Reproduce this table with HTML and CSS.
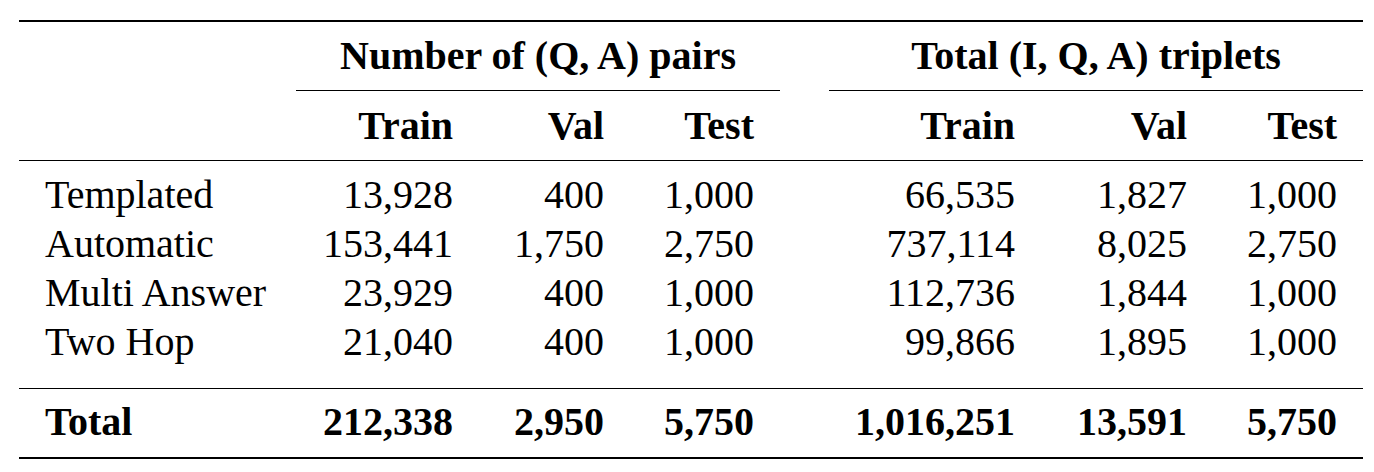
FILE: index.html
```html
<!DOCTYPE html>
<html lang="en">
<head>
<meta charset="utf-8">
<title>Dataset statistics</title>
<link rel="stylesheet" href="styles.css">
</head>
<body>
<table class="stats">
  <colgroup>
    <col class="c-label">
    <col class="c-train1">
    <col class="c-val1">
    <col class="c-test1">
    <col class="c-gap">
    <col class="c-train2">
    <col class="c-val2">
    <col class="c-test2">
  </colgroup>
  <thead>
    <tr class="group-row">
      <th></th>
      <th colspan="3" class="group"><div class="group-label">Number of (Q, A) pairs</div></th>
      <th></th>
      <th colspan="3" class="group"><div class="group-label">Total (I, Q, A) triplets</div></th>
    </tr>
    <tr class="split-row">
      <th></th>
      <th class="num">Train</th>
      <th class="num">Val</th>
      <th class="num">Test</th>
      <th></th>
      <th class="num">Train</th>
      <th class="num">Val</th>
      <th class="num">Test</th>
    </tr>
  </thead>
  <tbody class="data">
    <tr class="first">
      <td class="label">Templated</td>
      <td class="num">13,928</td><td class="num">400</td><td class="num">1,000</td>
      <td></td>
      <td class="num">66,535</td><td class="num">1,827</td><td class="num">1,000</td>
    </tr>
    <tr>
      <td class="label">Automatic</td>
      <td class="num">153,441</td><td class="num">1,750</td><td class="num">2,750</td>
      <td></td>
      <td class="num">737,114</td><td class="num">8,025</td><td class="num">2,750</td>
    </tr>
    <tr>
      <td class="label">Multi Answer</td>
      <td class="num">23,929</td><td class="num">400</td><td class="num">1,000</td>
      <td></td>
      <td class="num">112,736</td><td class="num">1,844</td><td class="num">1,000</td>
    </tr>
    <tr class="last">
      <td class="label">Two Hop</td>
      <td class="num">21,040</td><td class="num">400</td><td class="num">1,000</td>
      <td></td>
      <td class="num">99,866</td><td class="num">1,895</td><td class="num">1,000</td>
    </tr>
  </tbody>
  <tfoot>
    <tr class="total">
      <td class="label">Total</td>
      <td class="num">212,338</td><td class="num">2,950</td><td class="num">5,750</td>
      <td></td>
      <td class="num">1,016,251</td><td class="num">13,591</td><td class="num">5,750</td>
    </tr>
  </tfoot>
</table>
</body>
</html>
```

FILE: styles.css
```css
html, body {
  margin: 0;
  padding: 0;
  background: #ffffff;
}

body {
  font-family: "Liberation Serif", "Times New Roman", serif;
  font-size: 40px;
  color: #000000;
}

.stats {
  margin: 20px 0 0 19px;
  width: 1344px;
  table-layout: fixed;
  border-collapse: separate;
  border-spacing: 0;
  border-top: 2px solid #000;
  border-bottom: 2px solid #000;
}

.c-label  { width: 277px; }
.c-train1 { width: 183px; }
.c-val1   { width: 151px; }
.c-test1  { width: 150px; }
.c-gap    { width: 49px; }
.c-train2 { width: 212px; }
.c-val2   { width: 172px; }
.c-test2  { width: 150px; }

.stats th,
.stats td {
  padding: 0 26px;
  white-space: nowrap;
  vertical-align: top;
}

.stats th {
  font-weight: bold;
}

.num {
  text-align: right;
}

.label {
  text-align: left;
}

/* group header with cmidrule */
.group-row th {
  line-height: 68px;
  height: 69px;
}

.stats th.group {
  padding: 0;
  text-align: center;
}

.group-label {
  line-height: 68px;
  border-bottom: 1px solid #000;
}

/* Train / Val / Test row with midrule */
.split-row th {
  line-height: 69px;
  border-bottom: 1px solid #000;
}

/* body rows */
.data td {
  line-height: 49px;
}

.data tr.first td {
  padding-top: 9px;
}

.data tr.last td {
  padding-bottom: 22px;
  border-bottom: 1px solid #000;
}

/* total row */
.total td {
  font-weight: bold;
  line-height: 66px;
  padding-bottom: 2px;
}
```
